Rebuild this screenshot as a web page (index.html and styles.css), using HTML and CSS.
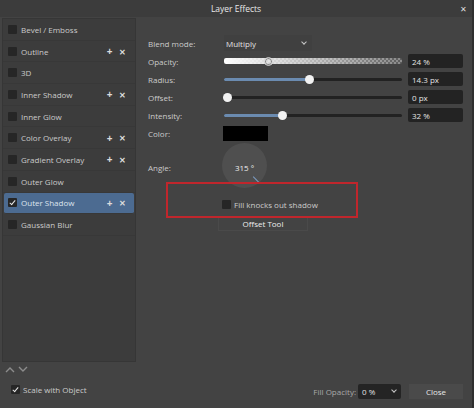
FILE: index.html
```html
<!DOCTYPE html>
<html lang="en">

<head>
    <meta charset="UTF-8">
    <title>Layer Effects</title>
    <link rel="stylesheet" href="styles.css">
</head>

<body>
    <div class="dialog">
        <div class="titlebar">
            <span class="title">Layer Effects</span>
            <span class="closeX">&#x2715;</span>
        </div>
        <div class="body">
            <div class="side">
                <ul class="effects">
                    <li><i class="box"></i><span>Bevel / Emboss</span></li>
                    <li><i class="box"></i><span>Outline</span><b>+</b><b>&#x2715;</b></li>
                    <li><i class="box"></i><span>3D</span></li>
                    <li><i class="box"></i><span>Inner Shadow</span><b>+</b><b>&#x2715;</b></li>
                    <li><i class="box"></i><span>Inner Glow</span></li>
                    <li><i class="box"></i><span>Color Overlay</span><b>+</b><b>&#x2715;</b></li>
                    <li><i class="box"></i><span>Gradient Overlay</span><b>+</b><b>&#x2715;</b></li>
                    <li><i class="box"></i><span>Outer Glow</span></li>
                    <li class="on"><i class="box checked"></i><span>Outer Shadow</span><b>+</b><b>&#x2715;</b></li>
                    <li><i class="box"></i><span>Gaussian Blur</span></li>
                </ul>
                <div class="arrows">
                    <svg width="10" height="7" viewBox="0 0 10 7"><path d="M1 6 L5 2 L9 6" fill="none" stroke="#8c8c8c" stroke-width="1.4"/></svg>
                    <svg width="10" height="7" viewBox="0 0 10 7"><path d="M1 1 L5 5 L9 1" fill="none" stroke="#8c8c8c" stroke-width="1.4"/></svg>
                </div>
                <div class="scale"><i class="box checked"></i><span>Scale with Object</span></div>
            </div>
            <div class="main">
                <div class="row">
                    <span class="lbl">Blend mode:</span>
                    <div class="select">Multiply<em class="chev"></em></div>
                </div>
                <div class="row">
                    <span class="lbl">Opacity:</span>
                    <div class="slider alpha"><i class="thumb hollow" style="left: 25%"></i></div>
                    <div class="val">24 %</div>
                </div>
                <div class="row">
                    <span class="lbl">Radius:</span>
                    <div class="slider"><i class="fill" style="width: 48%"></i><i class="thumb" style="left: 48%"></i></div>
                    <div class="val">14.3 px</div>
                </div>
                <div class="row">
                    <span class="lbl">Offset:</span>
                    <div class="slider"><i class="thumb" style="left: 2%"></i></div>
                    <div class="val">0 px</div>
                </div>
                <div class="row">
                    <span class="lbl">Intensity:</span>
                    <div class="slider"><i class="fill" style="width: 33%"></i><i class="thumb" style="left: 33%"></i></div>
                    <div class="val">32 %</div>
                </div>
                <div class="row">
                    <span class="lbl">Color:</span>
                    <div class="swatch"></div>
                </div>
                <div class="row angleRow">
                    <span class="lbl">Angle:</span>
                    <div class="dial">
                        <span>315 °</span>
                        <i class="needle"></i>
                    </div>
                </div>
                <div class="knock">
                    <i class="box"></i><span>Fill knocks out shadow</span>
                </div>
                <div class="offsetBtn">Offset Tool</div>
                <div class="mark"></div>
                <div class="footer">
                    <span class="lbl2">Fill Opacity:</span>
                    <div class="select dark">0 %<em class="chev"></em></div>
                    <div class="btn">Close</div>
                </div>
            </div>
        </div>
    </div>
</body>

</html>
```

FILE: styles.css
```css
body {
    margin: 0;
    background: #2e2e2e;
    font-family: "Open Sans", "Noto Sans", sans-serif;
    font-size: 8px;
    color: #cbcbcb;
}

.dialog {
    width: 472px;
    height: 408px;
    background: #434343;
    border-right: 2px solid #2f2f2f;
    display: flex;
    flex-direction: column;
}

.titlebar {
    height: 17px;
    background: #3c3c3c;
    position: relative;
    display: flex;
    align-items: center;
    justify-content: center;
}

.title {
    color: #e8e8e8;
    font-size: 8.5px;
}

.closeX {
    position: absolute;
    right: 5px;
    top: 3px;
    color: #dedede;
    font-size: 8px;
}

.body {
    flex: 1;
    display: flex;
}

.side {
    width: 136px;
    display: flex;
    flex-direction: column;
}

.effects {
    list-style: none;
    margin: 1px 0 0 2px;
    padding: 0;
    height: 342px;
    background: #3c3c3c;
    border: 1px solid #363636;
}

.effects li {
    height: 21.7px;
    box-sizing: border-box;
    display: flex;
    align-items: center;
    padding: 0 6px 0 5px;
    border-bottom: 1px solid #383838;
}

.effects li span {
    flex: 1;
    margin-left: 4px;
}

.effects li b {
    font-weight: bold;
    color: #dcdcdc;
    width: 13px;
    text-align: center;
    font-size: 10px;
}

.effects li b + b {
    font-size: 8px;
}

.effects li.on {
    background: #4c6b91;
    color: #dde4ee;
    border-radius: 2px;
    margin: 0 1px;
    padding-left: 4px;
    padding-right: 5px;
}

.box {
    display: inline-block;
    width: 9px;
    height: 9px;
    background: #262626;
    border-radius: 1px;
    position: relative;
}

.box.checked::after {
    content: "";
    position: absolute;
    left: 3px;
    top: 1px;
    width: 2px;
    height: 5px;
    border: solid #e8e8e8;
    border-width: 0 1.2px 1.2px 0;
    transform: rotate(40deg);
}

.arrows {
    display: flex;
    gap: 3px;
    margin: 4px 0 0 5px;
}

.scale {
    display: flex;
    align-items: center;
    gap: 3px;
    margin: 11px 0 0 11px;
}

.main {
    flex: 1;
    position: relative;
    padding: 18px 0 0 12px;
    display: flex;
    flex-direction: column;
}

.row {
    height: 18px;
    display: flex;
    align-items: center;
}

.row:first-child {
    height: 16px;
    margin-bottom: 1px;
}

.lbl {
    width: 76px;
}

.select {
    width: 88px;
    height: 16px;
    box-sizing: border-box;
    padding-left: 2px;
    background: #404040;
    display: flex;
    align-items: center;
    color: #e2e2e2;
    position: relative;
}

.chev {
    position: absolute;
    right: 6px;
    top: 5px;
    width: 3px;
    height: 3px;
    border: solid #c8c8c8;
    border-width: 0 1px 1px 0;
    transform: rotate(45deg);
}

.slider {
    width: 178px;
    height: 3px;
    background: #222;
    border-radius: 2px;
    position: relative;
}

.slider.alpha {
    height: 6px;
    background:
        linear-gradient(to right, rgba(255,255,255,1), rgba(255,255,255,0.5) 55%, rgba(255,255,255,0)),
        repeating-conic-gradient(#8a8a8a 0 25%, #5c5c5c 0 50%) 0 0 / 4px 4px;
}

.slider .fill {
    position: absolute;
    left: 0;
    top: 0;
    height: 3px;
    background: #6b8bb0;
    border-radius: 2px;
}

.thumb {
    position: absolute;
    top: 50%;
    width: 9px;
    height: 9px;
    margin: -4.5px 0 0 -4.5px;
    border-radius: 50%;
    background: #f2f2f2;
}

.thumb.hollow {
    background: transparent;
    border: 1.5px solid #d8d8d8;
    box-sizing: border-box;
    box-shadow: 0 0 0 1px #888 inset;
}

.val {
    width: 55px;
    height: 14px;
    margin-left: 6px;
    box-sizing: border-box;
    padding-left: 4px;
    background: #232323;
    border-radius: 2px;
    color: #e4e4e4;
    display: flex;
    align-items: center;
}

.swatch {
    width: 45px;
    height: 15px;
    background: #000;
    margin-left: -1px;
}

.angleRow {
    height: 45px;
    margin-top: 1px;
    align-items: flex-start;
}

.angleRow .lbl {
    padding-top: 19px;
}

.dial {
    width: 45px;
    height: 45px;
    margin-left: -2px;
    border-radius: 50%;
    background: #4f4f4f;
    display: flex;
    align-items: center;
    justify-content: center;
    color: #eeeeee;
    position: relative;
}

.dial span {
    margin-top: 3px;
}

.needle {
    position: absolute;
    left: 30px;
    top: 36px;
    width: 8px;
    height: 1px;
    background: #7c9cc4;
    transform: rotate(45deg);
}

.knock {
    display: flex;
    align-items: center;
    gap: 3px;
    margin: 11px 0 0 74px;
    height: 10px;
}

.offsetBtn {
    width: 90px;
    height: 15px;
    margin: 7px 0 0 70px;
    box-sizing: border-box;
    border: 1px solid #4a4a4a;
    display: flex;
    align-items: center;
    justify-content: center;
    color: #eeeeee;
}

.mark {
    position: absolute;
    left: 30px;
    top: 165px;
    width: 192px;
    height: 36px;
    box-sizing: border-box;
    border: 2px solid #c0262c;
}

.footer {
    margin-top: auto;
    margin-bottom: 9px;
    display: flex;
    align-items: center;
    justify-content: flex-end;
    padding-right: 9px;
}

.lbl2 {
    color: #a8a8a8;
    margin-right: 2px;
}

.select.dark {
    width: 43px;
    height: 15px;
    padding-left: 4px;
    background: #242424;
    border-radius: 2px;
}

.select.dark .chev {
    top: 4px;
    right: 5px;
}

.btn {
    width: 54px;
    height: 15px;
    margin-left: 8px;
    background: #4a4a4a;
    display: flex;
    align-items: center;
    justify-content: center;
    color: #e8e8e8;
}
```
